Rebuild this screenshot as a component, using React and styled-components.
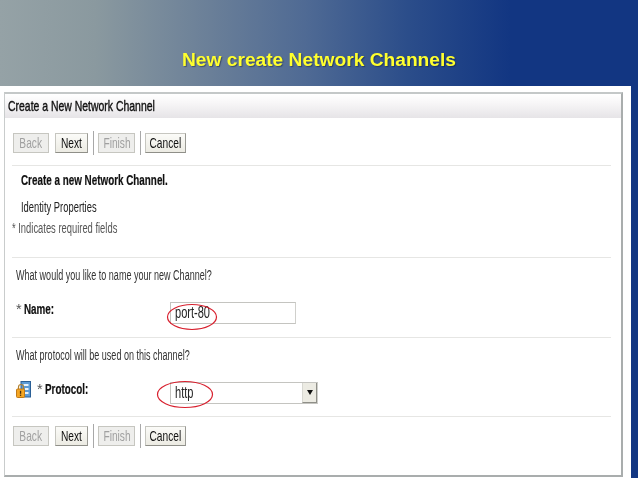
import React from "react";
import styled, { createGlobalStyle, css } from "styled-components";

const Global = createGlobalStyle`
  html, body { margin: 0; padding: 0; background: #123682; }
  body { width: 638px; height: 478px; overflow: hidden; }
`;

const narrow = (x = 0.7, y = 1) => css`
  transform: scale(${x}, ${y});
  transform-origin: left center;
  white-space: nowrap;
`;

const Slide = styled.div`
  width: 638px;
  height: 478px;
  display: flex;
  flex-direction: column;
  background: #123682;
  font-family: "Liberation Sans", Arial, sans-serif;
`;

const Header = styled.header`
  height: 86px;
  box-sizing: border-box;
  padding-top: 49px;
  text-align: center;
  background: linear-gradient(90deg, #95a2a6 0%, #8a999f 15%, #6a7f98 33%, #4f6a94 48%, #2b4d8a 64%, #123682 80%, #123682 100%);
`;

const SlideTitle = styled.h1`
  margin: 0;
  font: bold 19.2px/21px "Liberation Sans", Arial, sans-serif;
  color: #ffff2e;
  text-shadow: 1px 1px 1px rgba(20, 30, 60, 0.5);
  filter: blur(0.3px);
`;

const Sheet = styled.main`
  width: 631px;
  height: 392px;
  box-sizing: border-box;
  padding: 6px 8px 1px 4px;
  background: #fff;
  display: flex;
`;

const Panel = styled.section`
  flex: 1;
  display: flex;
  flex-direction: column;
  border: 1px solid #c9cccc;
  border-top: 2px solid #c4c8c8;
  border-right: 2px solid #a9adad;
  border-bottom: 2px solid #a9adad;
  color: #222;
  filter: blur(0.4px);
`;

const TitleBand = styled.div`
  height: 24px;
  background: linear-gradient(#fff 0%, #f8f7f8 35%, #e6e4e7 100%);
`;

const PanelTitle = styled.h2`
  margin: 0 0 0 3px;
  font-size: 14.5px;
  font-weight: 400;
  line-height: 24px;
  color: #111;
  -webkit-text-stroke: 0.4px #111;
  ${narrow(0.72)}
`;

const Toolbar = styled.div`
  display: flex;
  align-items: center;
  height: 24px;
  margin-top: ${(p) => p.$top}px;
  padding-left: 8px;
`;

const WizardButton = styled.button`
  box-sizing: border-box;
  width: ${(p) => p.$w}px;
  height: 20px;
  margin-right: ${(p) => p.$gap}px;
  padding: 0;
  display: flex;
  align-items: center;
  justify-content: center;
  font: 15px/18px "Liberation Sans", Arial, sans-serif;
  color: ${(p) => (p.disabled ? "#a0a0a0" : "#111")};
  background: ${(p) => (p.disabled ? "#eeeeec" : "linear-gradient(#fbfbf8, #ecebe3)")};
  border: 1px solid #c6c6c0;
  border-right-color: ${(p) => (p.disabled ? "#c6c6c0" : "#9a9a94")};
  border-bottom-color: ${(p) => (p.disabled ? "#c6c6c0" : "#8f8f88")};
`;

const ButtonText = styled.span`
  display: inline-block;
  transform: scaleX(0.68);
  white-space: nowrap;
`;

const Separator = styled.span`
  width: 1px;
  height: 24px;
  margin-right: ${(p) => p.$gap}px;
  background: #a8a8a8;
`;

const Divider = styled.hr`
  margin: ${(p) => p.$top}px 10px 0 ${(p) => p.$left}px;
  border: 0;
  height: 1px;
  background: #e6e6e4;
`;

const Heading = styled.h3`
  margin: 6px 0 0 16px;
  font-size: 14.5px;
  line-height: 16px;
  font-weight: 700;
  color: #111;
  -webkit-text-stroke: 0.2px #111;
  ${narrow(0.68)}
`;

const Sub = styled.p`
  margin: 11px 0 0 16px;
  font-size: 14px;
  line-height: 16px;
  color: #222;
  ${narrow(0.67)}
`;

const Required = styled.p`
  margin: 5px 0 0 7px;
  font-size: 14px;
  line-height: 16px;
  color: #555;
  ${narrow(0.67)}
`;

const Question = styled.p`
  margin: ${(p) => p.$top}px 0 0 11px;
  font-size: 14px;
  line-height: 16px;
  color: #333;
  ${narrow(0.645)}
`;

const FieldRow = styled.div`
  display: grid;
  grid-template-columns: 154px auto;
  justify-content: start;
  align-items: center;
  height: 22px;
  margin-top: ${(p) => p.$top}px;
  padding-left: 11px;
`;

const FieldLabel = styled.label`
  display: flex;
  align-items: center;
  gap: 2px;
  margin-top: -8px;
  font-size: 14.5px;
  font-weight: 700;
  color: #111;
`;

const LabelText = styled.span`
  display: inline-block;
  -webkit-text-stroke: 0.2px #111;
  ${narrow(0.68)}
`;

const Star = styled.span`
  font-weight: 400;
  color: #555;
`;

const Control = styled.div`
  position: relative;
  box-sizing: border-box;
  width: ${(p) => p.$w}px;
  height: 22px;
  display: flex;
  align-items: center;
  justify-content: space-between;
  background: #fff;
  border: 1px solid #c4c4c0;
  border-right-color: #d0d0cc;
  padding-left: ${(p) => p.$pad}px;
  font-size: 17px;
  color: #222;
`;

const ControlText = styled.span`
  display: inline-block;
  ${narrow(0.65)}
`;

const Arrow = styled.span`
  box-sizing: border-box;
  width: 15px;
  height: 20px;
  display: flex;
  align-items: center;
  justify-content: center;
  background: #ecebe3;
  border-left: 1px solid #d8d8d2;
  border-right: 1px solid #8f8f88;
  border-bottom: 1px solid #8f8f88;
  &::after {
    content: "";
    border-left: 3.5px solid transparent;
    border-right: 3.5px solid transparent;
    border-top: 5px solid #111;
  }
`;

const Ring = styled.svg`
  position: absolute;
  left: ${(p) => p.$x}px;
  top: ${(p) => p.$y}px;
  overflow: visible;
`;

const RedEllipse = ({ x, y, w, h }) => (
  <Ring $x={x} $y={y} width={w} height={h} viewBox={`0 0 ${w} ${h}`} fill="none">
    <ellipse cx={w / 2} cy={h / 2} rx={w / 2 - 0.5} ry={h / 2 - 0.5} stroke="#d8202e" strokeWidth="1.2" />
  </Ring>
);

const ProtocolIcon = () => (
  <svg width="15" height="17" viewBox="0 0 15 17">
    <rect x="5" y="0.5" width="9.5" height="15.5" fill="#5c9bd6" stroke="#2a5f96" />
    <rect x="7.5" y="3" width="5" height="2" fill="#e8f2fb" />
    <rect x="9" y="7" width="3.5" height="2" fill="#e8f2fb" />
    <rect x="9" y="11" width="3.5" height="2" fill="#e8f2fb" />
    <path d="M2.5 8V6a2.5 2.5 0 0 1 5 0V8" fill="none" stroke="#b08030" strokeWidth="1.2" />
    <rect x="0.5" y="8" width="8" height="8.5" rx="1" fill="#f5a623" stroke="#c07a18" />
    <rect x="3.9" y="9.8" width="1.3" height="3" fill="#4a2f0c" />
    <rect x="3.9" y="13.6" width="1.3" height="1.3" fill="#4a2f0c" />
  </svg>
);

const Btn = ({ w, gap, disabled, children }) => (
  <WizardButton disabled={disabled} $w={w} $gap={gap}>
    <ButtonText>{children}</ButtonText>
  </WizardButton>
);

const Buttons = ({ top }) => (
  <Toolbar $top={top}>
    <Btn disabled w={36} gap={6}>Back</Btn>
    <Btn w={33} gap={5}>Next</Btn>
    <Separator $gap={4} />
    <Btn disabled w={37} gap={5}>Finish</Btn>
    <Separator $gap={4} />
    <Btn w={41} gap={0}>Cancel</Btn>
  </Toolbar>
);

export default function App() {
  return (
    <Slide>
      <Global />
      <Header>
        <SlideTitle>New create Network Channels</SlideTitle>
      </Header>
      <Sheet>
        <Panel>
          <TitleBand>
            <PanelTitle>Create a New Network Channel</PanelTitle>
          </TitleBand>
          <Buttons top={13} />
          <Divider $top={10} $left={7} />
          <Heading>Create a new Network Channel.</Heading>
          <Sub>Identity Properties</Sub>
          <Required>* Indicates required fields</Required>
          <Divider $top={21} $left={7} />
          <Question $top={9}>What would you like to name your new Channel?</Question>
          <FieldRow $top={19}>
            <FieldLabel><Star>*</Star><LabelText>Name:</LabelText></FieldLabel>
            <Control $w={126} $pad={4}>
              <ControlText>port-80</ControlText>
              <RedEllipse x={-4} y={1} w={50} h={26} />
            </Control>
          </FieldRow>
          <Divider $top={13} $left={7} />
          <Question $top={9}>What protocol will be used on this channel?</Question>
          <FieldRow $top={19}>
            <FieldLabel><ProtocolIcon /><Star>&nbsp;*</Star><LabelText>Protocol:</LabelText></FieldLabel>
            <Control $w={148} $pad={4}>
              <ControlText>http</ControlText>
              <Arrow />
              <RedEllipse x={-14} y={-2} w={56} h={27} />
            </Control>
          </FieldRow>
          <Divider $top={12} $left={7} />
          <Buttons top={7} />
        </Panel>
      </Sheet>
    </Slide>
  );
}
